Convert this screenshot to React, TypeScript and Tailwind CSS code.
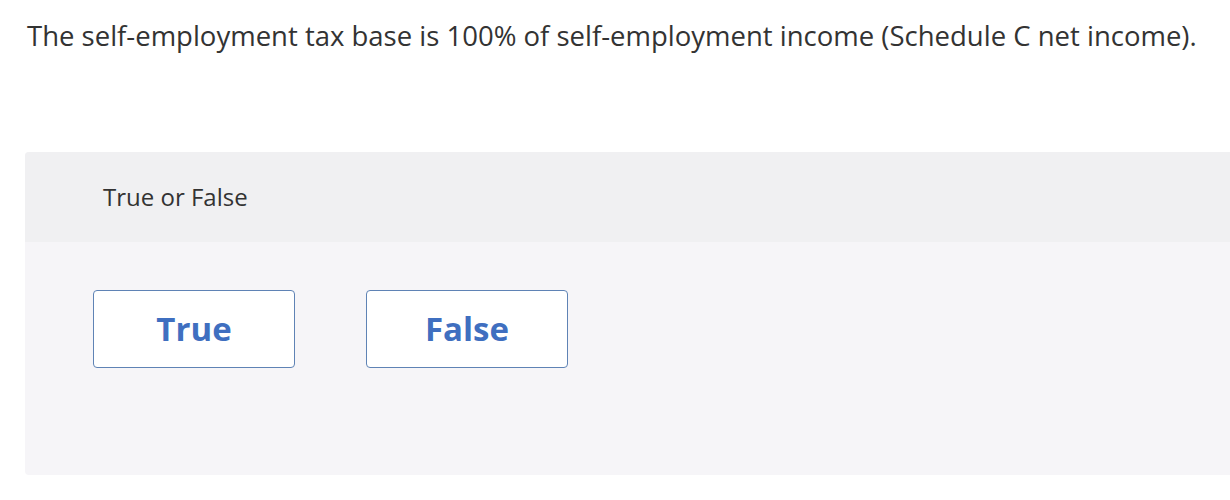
export default function App() {
  return (
    <div className="w-[1230px] h-[500px] overflow-hidden bg-white font-['Open_Sans',sans-serif]">
      <p className="pl-[27px] pt-[20px] text-[27.5px] leading-[32px] text-[#333333] whitespace-nowrap">
        The self-employment tax base is 100% of self-employment income (Schedule C net income).
      </p>

      <div className="mt-[100px] ml-[25px] w-[1220px] h-[323px] rounded-[4px] overflow-hidden bg-[#f6f5f8]">
        <div className="h-[90px] bg-[#f0f0f2] flex items-center pl-[78px]">
          <span className="text-[24px] text-[#333333]">True or False</span>
        </div>
        <div className="flex gap-[71px] pl-[68px] pt-[48px]">
          <button className="w-[202px] h-[78px] bg-white border border-[#5f83b5] rounded-[4px] text-[33px] font-bold text-[#3f6fc0]">
            True
          </button>
          <button className="w-[202px] h-[78px] bg-white border border-[#5f83b5] rounded-[4px] text-[33px] font-bold text-[#3f6fc0]">
            False
          </button>
        </div>
      </div>
    </div>
  );
}
